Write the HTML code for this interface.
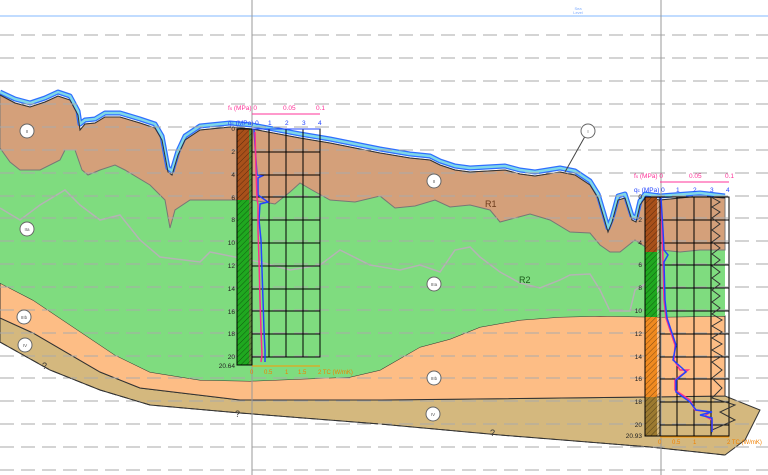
<!DOCTYPE html>
<html><head><style>body{margin:0;background:#fff}svg{display:block}</style></head><body>
<svg width="768" height="475" viewBox="0 0 768 475" xmlns="http://www.w3.org/2000/svg" font-family="Liberation Sans, sans-serif">
<defs>
<pattern id="h" width="4" height="4" patternUnits="userSpaceOnUse" patternTransform="rotate(45)"><rect width="4" height="4" fill="none"/><line x1="0" y1="0" x2="0" y2="4" stroke="#000" stroke-width="1" opacity=".45"/></pattern>
</defs>
<rect width="768" height="475" fill="#fff"/>
<line x1="0" y1="16" x2="768" y2="16" stroke="#9cc8ff" stroke-width="1.2"/>
<text x="578" y="10" font-size="4" fill="#7aaaff" text-anchor="middle">Sea</text>
<text x="578" y="14" font-size="4" fill="#7aaaff" text-anchor="middle">Level</text>
<!-- IV -->
<polygon fill="#d4b87e" stroke="#333" stroke-width="1" points="0,318 33,333 100,372 140,388 240,400 380,400 650,397 725,396 760,410 745,440 725,455 650,447 500,435 380,424 240,413 150,405 100,390 50,370 0,342"/>
<!-- IIIb -->
<polygon fill="#fdbd85" stroke="#333" stroke-width="1" points="0,283 33,300 115,355 150,372 200,380 250,381 350,377 380,370 420,347 450,339 480,327 520,320 560,317 600,316 661,317 725,316 725,396 650,397 380,400 240,400 140,388 100,372 33,333 0,318"/>
<!-- green -->
<polygon fill="#7fdc7f" points="0,95 15,103 30,107 45,102 58,96 70,100 78,115 80,130 85,124 95,123 105,117 120,117 140,123 155,128 162,140 168,172 172,175 178,155 185,140 200,130 230,127 252,129 300,138 330,143 350,147 380,153 410,158 430,160 440,165 455,170 470,172 505,170 520,174 535,176 560,172 575,175 590,185 598,198 604,218 608,232 612,222 618,200 625,198 632,220 636,222 640,205 645,198 660,200 700,196 725,198 725,316 661,317 600,316 560,317 520,320 480,327 450,339 420,347 380,370 350,377 250,381 200,380 150,372 115,355 33,300 0,283"/>
<!-- brown -->
<polygon fill="#d4a07a" stroke="#777" stroke-width="1" points="0,95 15,103 30,107 45,102 58,96 70,100 78,115 80,130 85,124 95,123 105,117 120,117 140,123 155,128 162,140 168,172 172,175 178,155 185,140 200,130 230,127 252,129 300,138 330,143 350,147 380,153 410,158 430,160 440,165 455,170 470,172 505,170 520,174 535,176 560,172 575,175 590,185 598,198 604,218 608,232 612,222 618,200 625,198 632,220 636,222 640,205 645,198 660,200 700,196 725,198 725,250 700,250 680,252 661,250 650,250 635,240 620,252 610,252 600,245 590,233 570,232 550,220 530,214 515,218 500,222 490,210 470,205 450,207 435,200 415,206 395,208 380,196 355,202 330,200 312,190 300,183 290,192 275,204 252,200 190,200 175,210 170,228 165,200 150,185 125,170 115,165 100,170 88,175 82,170 75,150 65,150 60,160 40,170 20,170 10,162 0,148"/>
<!-- water -->
<polyline fill="none" stroke="#2f6fff" stroke-width="5" stroke-linejoin="round" points="0,92 15,99 30,103 45,98 58,92 70,96 78,111 80,124 85,120 95,119 105,113 120,113 140,119 155,124 162,136 168,168 172,171 178,151 185,136 200,126 230,123 252,125 300,134 330,139 350,143 380,149 410,154 430,156 440,161 455,166 470,168 505,166 520,170 535,172 560,168 575,171 590,181 598,194 604,214 608,228 612,218 618,196 625,194 632,216 636,218 640,201 645,194 660,196 700,193 725,196"/>
<polyline fill="none" stroke="#7fd8e8" stroke-width="2.5" stroke-linejoin="round" points="0,92 15,99 30,103 45,98 58,92 70,96 78,111 80,124 85,120 95,119 105,113 120,113 140,119 155,124 162,136 168,168 172,171 178,151 185,136 200,126 230,123 252,125 300,134 330,139 350,143 380,149 410,154 430,156 440,161 455,166 470,168 505,166 520,170 535,172 560,168 575,171 590,181 598,194 604,214 608,228 612,218 618,196 625,194 632,216 636,218 640,201 645,194 660,196 700,193 725,196"/>
<polyline fill="none" stroke="#333" stroke-width="1" points="0,95 15,103 30,107 45,102 58,96 70,100 78,115 80,130 85,124 95,123 105,117 120,117 140,123 155,128 162,140 168,172 172,175 178,155 185,140 200,130 230,127 252,129 300,138 330,143 350,147 380,153 410,158 430,160 440,165 455,170 470,172 505,170 520,174 535,176 560,172 575,175 590,185 598,198 604,218 608,232 612,222 618,200 625,198 632,220 636,222 640,205 645,198 660,200 700,196 725,198"/>
<!-- R2 grey line -->
<polyline fill="none" stroke="#b4b4b4" stroke-width="1.5" points="0,208 20,220 40,205 65,190 80,205 100,220 120,215 140,240 160,257 200,262 210,252 240,258 260,262 290,270 320,265 340,250 370,265 400,270 420,265 440,272 455,250 470,247 480,257 500,272 520,283 540,288 560,280 570,275 590,274 600,290 610,311 630,311 635,290 645,284 655,295 661,285"/>
<!-- dashed grid -->
<g stroke="#aaa" stroke-width="1" stroke-dasharray="14,7">
<line x1="0" y1="35" x2="768" y2="35"/><line x1="0" y1="58" x2="768" y2="58"/><line x1="0" y1="81" x2="768" y2="81"/><line x1="0" y1="104" x2="768" y2="104"/><line x1="0" y1="127" x2="768" y2="127"/><line x1="0" y1="150" x2="768" y2="150"/><line x1="0" y1="173" x2="768" y2="173"/><line x1="0" y1="196" x2="768" y2="196"/><line x1="0" y1="218" x2="768" y2="218"/><line x1="0" y1="241" x2="768" y2="241"/><line x1="0" y1="264" x2="768" y2="264"/><line x1="0" y1="287" x2="768" y2="287"/><line x1="0" y1="310" x2="768" y2="310"/><line x1="0" y1="333" x2="768" y2="333"/><line x1="0" y1="356" x2="768" y2="356"/><line x1="0" y1="378" x2="768" y2="378"/><line x1="0" y1="401" x2="768" y2="401"/><line x1="0" y1="424" x2="768" y2="424"/><line x1="0" y1="447" x2="768" y2="447"/><line x1="0" y1="470" x2="768" y2="470"/>
</g>
<polyline fill="none" stroke="#333" stroke-width="1" stroke-dasharray="8,4" points="0,342 50,370 100,390 150,405 240,413 380,424 500,435 650,447 725,455"/>
<line x1="252" y1="0" x2="252" y2="475" stroke="#999" stroke-width="1"/>
<line x1="661" y1="0" x2="661" y2="475" stroke="#999" stroke-width="1"/>
<!-- left borehole -->
<rect x="237" y="129" width="12" height="71" fill="#a8501a"/>
<rect x="237" y="200" width="12" height="165" fill="#1fa81f"/>
<rect x="249" y="129" width="3" height="236" fill="#5a8a3a"/>
<rect x="237" y="129" width="15" height="236" fill="url(#h)" stroke="#000" stroke-width="1"/>
<g stroke="#000" stroke-width="1" fill="none">
<rect x="252" y="129" width="68" height="228"/>
<line x1="269" y1="129" x2="269" y2="357"/><line x1="286" y1="129" x2="286" y2="357"/><line x1="303" y1="129" x2="303" y2="357"/>
<line x1="252" y1="152" x2="320" y2="152"/><line x1="252" y1="175" x2="320" y2="175"/><line x1="252" y1="197" x2="320" y2="197"/><line x1="252" y1="220" x2="320" y2="220"/><line x1="252" y1="243" x2="320" y2="243"/><line x1="252" y1="266" x2="320" y2="266"/><line x1="252" y1="289" x2="320" y2="289"/><line x1="252" y1="311" x2="320" y2="311"/><line x1="252" y1="334" x2="320" y2="334"/>
</g>
<line x1="252" y1="114" x2="320" y2="114" stroke="#ff3399"/>
<line x1="252" y1="129" x2="320" y2="129" stroke="#2244ff"/>
<line x1="252" y1="366" x2="320" y2="366" stroke="#f90"/>
<polyline fill="none" stroke="#2244ff" stroke-width="1.5" points="254,130 256,160 257,175 262,176 258,178 258,195 268,202 260,204 259,220 261,240 262,270 263,300 264,330 265,350 265,362"/>
<polyline fill="none" stroke="#ff2d8a" stroke-width="1.5" points="255,132 256,170 257,198 258,205 258,230 259,260 260,300 261,330 262,355 261,362"/>
<g font-size="6.5" fill="#222" text-anchor="end">
<text x="235" y="131">0</text><text x="235" y="154">2</text><text x="235" y="177">4</text><text x="235" y="200">6</text><text x="235" y="222">8</text><text x="235" y="245">10</text><text x="235" y="268">12</text><text x="235" y="291">14</text><text x="235" y="314">16</text><text x="235" y="336">18</text><text x="235" y="359">20</text><text x="235" y="368">20.64</text>
</g>
<g font-size="6.5" fill="#ff3399"><text x="228" y="110">f<tspan font-size="4.5">s</tspan> (MPa) 0</text><text x="283" y="110">0.05</text><text x="316" y="110">0.1</text></g>
<g font-size="6.5" fill="#2244ff"><text x="228" y="125">q<tspan font-size="4.5">c</tspan> (MPa) 0</text><text x="268" y="125">1</text><text x="285" y="125">2</text><text x="302" y="125">3</text><text x="318" y="125">4</text></g>
<g font-size="6" fill="#f08000"><text x="250" y="374">0</text><text x="264" y="374">0.5</text><text x="285" y="374">1</text><text x="298" y="374">1.5</text><text x="318" y="374">2 TC (W/mK)</text></g>
<!-- right borehole -->
<rect x="645" y="197" width="12" height="55" fill="#a8501a"/>
<rect x="645" y="252" width="12" height="65" fill="#1fa81f"/>
<rect x="645" y="317" width="12" height="80" fill="#f08a20"/>
<rect x="645" y="397" width="12" height="39" fill="#9c7a30"/>
<rect x="645" y="197" width="15" height="239" fill="url(#h)" stroke="#000" stroke-width="1"/>
<g stroke="#000" stroke-width="1" fill="none">
<rect x="660" y="197" width="69" height="239"/>
<line x1="677" y1="197" x2="677" y2="436"/><line x1="694" y1="197" x2="694" y2="436"/><line x1="711" y1="197" x2="711" y2="436"/>
<line x1="660" y1="220" x2="729" y2="220"/><line x1="660" y1="243" x2="729" y2="243"/><line x1="660" y1="265" x2="729" y2="265"/><line x1="660" y1="288" x2="729" y2="288"/><line x1="660" y1="311" x2="729" y2="311"/><line x1="660" y1="334" x2="729" y2="334"/><line x1="660" y1="357" x2="729" y2="357"/><line x1="660" y1="379" x2="729" y2="379"/><line x1="660" y1="402" x2="729" y2="402"/><line x1="660" y1="425" x2="729" y2="425"/>
</g>
<line x1="660" y1="182" x2="729" y2="182" stroke="#ff3399"/>
<polyline fill="none" stroke="#333" stroke-width="1" points="711,197 720,202 712,207 720,212 712,218 720,224 712,230 720,236 712,242 720,248 712,254 720,260 712,266 720,272 712,278 720,284 712,290 720,296 712,302 720,308 712,314 722,320 712,326 722,332 712,338 722,344 712,350 722,356 712,362 722,370 712,378 722,388 712,398 735,405 720,412 735,420 712,430 711,436"/>
<line x1="660" y1="437" x2="729" y2="437" stroke="#f90"/>
<polyline fill="none" stroke="#ff2d8a" stroke-width="1.5" points="661,200 662,230 663,260 664,300 666,318 670,330 675,345 674,360 680,370 688,370 675,380 675,390 690,400 695,410 710,412 705,416 712,420 712,430"/>
<polyline fill="none" stroke="#2244ff" stroke-width="1.5" points="661,198 663,230 664,250 668,255 664,262 665,300 667,318 671,330 676,345 673,360 682,368 686,372 676,380 676,392 690,402 696,410 712,412 700,415 712,418 712,432"/>
<g font-size="6.5" fill="#222" text-anchor="end">
<text x="642" y="199">0</text><text x="642" y="222">2</text><text x="642" y="245">4</text><text x="642" y="267">6</text><text x="642" y="290">8</text><text x="642" y="313">10</text><text x="642" y="336">12</text><text x="642" y="359">14</text><text x="642" y="381">16</text><text x="642" y="404">18</text><text x="642" y="427">20</text><text x="642" y="438">20.93</text>
</g>
<g font-size="6.5" fill="#ff3399"><text x="634" y="178">f<tspan font-size="4.5">s</tspan> (MPa) 0</text><text x="689" y="178">0.05</text><text x="725" y="178">0.1</text></g>
<g font-size="6.5" fill="#2244ff"><text x="634" y="192">q<tspan font-size="4.5">c</tspan> (MPa) 0</text><text x="676" y="192">1</text><text x="693" y="192">2</text><text x="710" y="192">3</text><text x="726" y="192">4</text></g>
<g font-size="6" fill="#f08000"><text x="658" y="444">0</text><text x="672" y="444">0.5</text><text x="693" y="444">1</text><text x="727" y="444">2 TC (W/mK)</text></g>
<!-- labels -->
<line x1="588" y1="131" x2="565" y2="172" stroke="#444" stroke-width="1"/>
<g fill="#fff" stroke="#666" stroke-width="1">
<circle cx="27" cy="131" r="7"/><circle cx="27" cy="229" r="7"/><circle cx="24" cy="317" r="7"/><circle cx="25" cy="345" r="7"/><circle cx="434" cy="181" r="7"/><circle cx="588" cy="131" r="7"/><circle cx="434" cy="284" r="7"/><circle cx="434" cy="378" r="7"/><circle cx="433" cy="414" r="7"/>
</g>
<g font-size="4.5" fill="#555" text-anchor="middle">
<text x="27" y="133">II</text><text x="27" y="231">IIa</text><text x="24" y="319">IIIb</text><text x="25" y="347">IV</text><text x="434" y="183">II</text><text x="588" y="133">I</text><text x="434" y="286">IIIa</text><text x="434" y="380">IIIb</text><text x="433" y="416">IV</text>
</g>
<text x="485" y="207" font-size="9" fill="#6b3a1a">R1</text>
<text x="519" y="283" font-size="9" fill="#1a5a1a">R2</text>
<g font-size="9" fill="#333"><text x="42" y="369">?</text><text x="235" y="417">?</text><text x="490" y="436">?</text></g>
</svg>
</body></html>
